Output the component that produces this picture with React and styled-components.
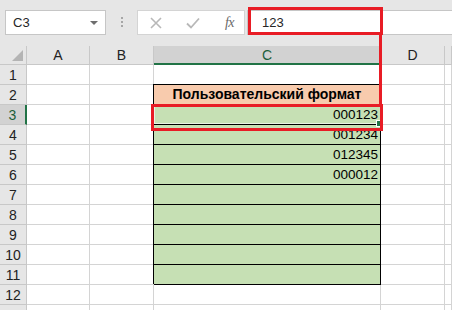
import React from 'react';
import styled, { createGlobalStyle } from 'styled-components';

const GlobalStyle = createGlobalStyle`
  html, body {
    margin: 0;
    padding: 0;
    background: #ffffff;
    overflow: hidden;
  }
  body {
    font-family: "Liberation Sans", Arial, sans-serif;
  }
`;

const Page = styled.div`
  position: relative;
  width: 452px;
  height: 310px;
  overflow: hidden;
  background: #ffffff;
`;

const Toolbar = styled.div`
  display: flex;
  align-items: flex-start;
  height: 46px;
  box-sizing: border-box;
  padding: 10px 0 0 5px;
  background: #e6e6e6;
`;

const NameBox = styled.div`
  display: flex;
  align-items: center;
  justify-content: space-between;
  box-sizing: border-box;
  width: 101px;
  height: 25px;
  padding: 0 7px 0 7px;
  background: #ffffff;
  border: 1px solid #c6c6c6;
  font-size: 13px;
  color: #262626;
`;

const Caret = styled.span`
  width: 0;
  height: 0;
  border-left: 4px solid transparent;
  border-right: 4px solid transparent;
  border-top: 4px solid #6e6e6e;
`;

const Grip = styled.div`
  display: flex;
  flex-direction: column;
  align-items: center;
  gap: 2px;
  width: 31px;
  padding-top: 7px;
`;

const GripDot = styled.span`
  width: 2px;
  height: 2px;
  background: #a6a6a6;
`;

const FxBox = styled.div`
  display: flex;
  align-items: center;
  justify-content: space-between;
  box-sizing: border-box;
  width: 108px;
  height: 25px;
  padding: 0 10px 0 12px;
  background: #ffffff;
  border: 1px solid #d4d4d4;
`;

const FxLabel = styled.span`
  font-family: "Liberation Serif", "Times New Roman", serif;
  font-style: italic;
  font-size: 14px;
  color: #6a6a6a;
  letter-spacing: -0.5px;
`;

const FormulaInput = styled.div`
  display: flex;
  align-items: center;
  flex: 1;
  box-sizing: border-box;
  height: 25px;
  margin-left: 2px;
  padding-left: 14px;
  background: #ffffff;
  border: 1px solid #c6c6c6;
  border-right: none;
  font-size: 13px;
  color: #262626;
`;

const Sheet = styled.div`
  display: grid;
  grid-template-columns: 27px 63px 64px 227px 64px 1fr;
  grid-template-rows: 19px repeat(13, 20px);
`;

const Corner = styled.div`
  position: relative;
  box-sizing: border-box;
  background: #e6e6e6;
  border-right: 1px solid #c8c8c8;
  border-bottom: 1px solid #c8c8c8;

  &::after {
    content: '';
    position: absolute;
    right: 3px;
    bottom: 3px;
    width: 0;
    height: 0;
    border-left: 11px solid transparent;
    border-bottom: 11px solid #b4b4b4;
  }
`;

const ColHeader = styled.div`
  display: flex;
  align-items: center;
  justify-content: center;
  box-sizing: border-box;
  background: ${p => (p.$selected ? '#d2d2d2' : '#e6e6e6')};
  border-right: 1px solid ${p => (p.$selected ? '#c0c0c0' : '#c8c8c8')};
  border-bottom: ${p => (p.$selected ? '2px solid #217346' : '1px solid #c8c8c8')};
  font-size: 14px;
  padding-top: ${p => (p.$selected ? '1px' : '0')};
  color: ${p => (p.$selected ? '#1d5e3a' : '#222222')};
`;

const RowHeader = styled.div`
  display: flex;
  align-items: center;
  justify-content: center;
  box-sizing: border-box;
  background: ${p => (p.$selected ? '#d2d2d2' : '#e6e6e6')};
  border-right: ${p => (p.$selected ? '2px solid #217346' : '1px solid #c8c8c8')};
  border-bottom: 1px solid #c8c8c8;
  font-size: 14px;
  padding-top: 1px;
  color: ${p => (p.$selected ? '#1d5e3a' : '#222222')};
`;

const Cell = styled.div`
  position: relative;
  display: flex;
  align-items: flex-end;
  justify-content: ${p => (p.$center ? 'center' : 'flex-end')};
  box-sizing: border-box;
  padding: 0 2px 2px 2px;
  background: ${p => p.$fill || '#ffffff'};
  border-right: 1px solid ${p => (p.$boxed ? '#000000' : '#d4d4d4')};
  border-bottom: 1px solid ${p => (p.$boxed ? '#000000' : '#d4d4d4')};
  box-shadow: ${p => (p.$boxed ? '-1px -1px 0 #000000' : 'none')};
  font-size: ${p => (p.$bold ? '14px' : '13.5px')};
  font-weight: ${p => (p.$bold ? 700 : 400)};
  color: #000000;
  white-space: nowrap;
`;

const Active = styled.span`
  position: absolute;
  inset: 0 0 0 0;
  border: 1px solid #e9f2e2;
  border-right: none;
  pointer-events: none;
`;

const FillHandle = styled.span`
  position: absolute;
  right: -3px;
  bottom: -3px;
  width: 5px;
  height: 5px;
  background: #217346;
  border: 1px solid #ffffff;
  z-index: 2;
`;

const Annotation = styled.div`
  position: absolute;
  box-sizing: border-box;
  border: 3px solid #e81c25;
  z-index: 5;
`;

const Connector = styled.div`
  position: absolute;
  width: 3px;
  background: #e81c25;
  z-index: 5;
`;

const columns = ['A', 'B', 'C', 'D', ''];

const values = {
  3: '000123',
  4: '001234',
  5: '012345',
  6: '000012',
};

const CrossIcon = () => (
  <svg width="12" height="12" viewBox="0 0 12 12">
    <path d="M1 1 L11 11 M11 1 L1 11" stroke="#b8b8b8" strokeWidth="1.6" fill="none" />
  </svg>
);

const CheckIcon = () => (
  <svg width="14" height="12" viewBox="0 0 14 12">
    <path d="M1 6.5 L5 10.5 L13 1.5" stroke="#b8b8b8" strokeWidth="1.8" fill="none" />
  </svg>
);

const cellProps = (row, col) => {
  if (col !== 'C') return {};
  if (row === 2) return { $fill: '#f8cbad', $boxed: true, $bold: true, $center: true };
  if (row >= 3 && row <= 11) return { $fill: '#c6e0b4', $boxed: true };
  return {};
};

const App = () => {
  const rows = Array.from({ length: 13 }, (_, i) => i + 1);

  return (
    <Page>
      <GlobalStyle />
      <Toolbar>
        <NameBox>
          <span>C3</span>
          <Caret />
        </NameBox>
        <Grip>
          <GripDot />
          <GripDot />
          <GripDot />
        </Grip>
        <FxBox>
          <CrossIcon />
          <CheckIcon />
          <FxLabel>fx</FxLabel>
        </FxBox>
        <FormulaInput>123</FormulaInput>
      </Toolbar>

      <Sheet>
        <Corner />
        {columns.map((c, i) => (
          <ColHeader key={i} $selected={c === 'C'}>{c}</ColHeader>
        ))}
        {rows.map(r => (
          <React.Fragment key={r}>
            {/* the 13th row only peeks in at the bottom edge, its label is hidden */}
            <RowHeader $selected={r === 3}>{r < 13 ? r : ''}</RowHeader>
            {columns.map((c, i) => (
              <Cell key={i} {...cellProps(r, c)}>
                {c === 'C' && r === 2 && 'Пользовательский формат'}
                {c === 'C' && values[r]}
                {c === 'C' && r === 3 && (
                  <>
                    <Active />
                    <FillHandle />
                  </>
                )}
              </Cell>
            ))}
          </React.Fragment>
        ))}
      </Sheet>

      <Annotation style={{ left: 248, top: 7, width: 135, height: 28 }} />
      <Connector style={{ left: 379, top: 34, height: 72 }} />
      <Annotation style={{ left: 151, top: 104, width: 232, height: 27 }} />
    </Page>
  );
};

export default App;
